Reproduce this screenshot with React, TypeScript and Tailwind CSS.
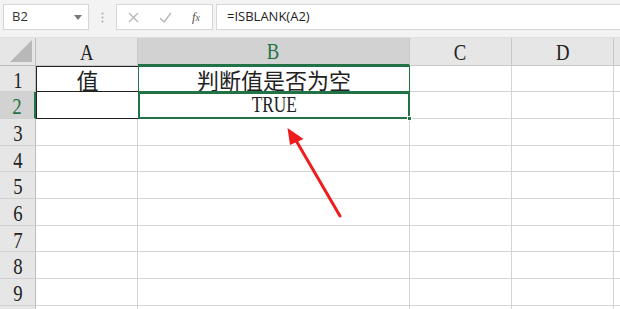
import React from "react";

const serif = { fontFamily: '"Liberation Serif", "Noto Sans CJK SC", serif' };
const cjk = { fontFamily: '"Noto Sans CJK SC", sans-serif' };

const colW = [36, 102, 272, 102, 102, 6];
const rowH = [26, 27, 27, 26, 27, 27, 26, 27, 27, 10];

function Narrow({ children, className = "" }: { children: React.ReactNode; className?: string }) {
  return <span className={"inline-block scale-x-[0.78] leading-none " + className}>{children}</span>;
}

export default function App() {
  const rows = rowH.map((h, i) => i + 1);
  return (
    <div className="relative w-[620px] h-[309px] overflow-hidden bg-white">
      {/* toolbar */}
      <div className="h-[38px] bg-[#f3f3f3] flex items-start pt-[4px] pl-[3px] border-b border-[#e0e0e0]">
        <div className="w-[86px] h-[26px] bg-white border border-[#d6d6d6] flex items-center justify-between pl-[8px] pr-[6px]">
          <span className="text-[13px] text-[#333]" style={{ fontFamily: '"Open Sans", "Noto Sans", sans-serif' }}>B2</span>
          <svg width="8" height="5" viewBox="0 0 8 5"><path d="M0 0 L8 0 L4 5 Z" fill="#777" /></svg>
        </div>
        <div className="w-[27px] h-[26px] flex items-center justify-center">
          <svg width="3" height="11" viewBox="0 0 3 11"><circle cx="1.5" cy="1.5" r="1" fill="#aaa" /><circle cx="1.5" cy="5.5" r="1" fill="#aaa" /><circle cx="1.5" cy="9.5" r="1" fill="#aaa" /></svg>
        </div>
        <div className="w-[97px] h-[26px] bg-white border border-[#d6d6d6] flex items-center">
          <div className="w-[32px] flex justify-center">
            <svg width="11" height="11" viewBox="0 0 11 11"><path d="M1 1 L10 10 M10 1 L1 10" stroke="#b5b5b5" strokeWidth="1.3" /></svg>
          </div>
          <div className="w-[32px] flex justify-center">
            <svg width="13" height="11" viewBox="0 0 13 11"><path d="M1 6 L5 10 L12 1" stroke="#b5b5b5" strokeWidth="1.3" fill="none" /></svg>
          </div>
          <div className="w-[30px] flex justify-center">
            <span className="text-[13px] italic text-[#555]" style={serif}>f<span className="text-[10px]">x</span></span>
          </div>
        </div>
        <div className="ml-[3px] flex-1 h-[26px] bg-white border border-[#d6d6d6] border-r-0 flex items-center pl-[10px]">
          <span className="text-[13px] text-[#222]" style={{ fontFamily: '"Open Sans", "Noto Sans", sans-serif' }}>=ISBLANK(A2)</span>
        </div>
      </div>

      {/* grid */}
      <div
        className="grid"
        style={{ gridTemplateColumns: colW.map((w) => w + "px").join(" "), gridTemplateRows: ["28px", ...rowH.map((h) => h + "px")].join(" ") }}
      >
        {/* header row */}
        <div className="bg-[#e6e6e6] border-r border-b border-[#bdbdbd] relative">
          <svg className="absolute right-[3px] bottom-[3px]" width="22" height="22" viewBox="0 0 22 22"><path d="M22 0 L22 22 L0 22 Z" fill="#b8b8b8" /></svg>
        </div>
        <div className="bg-[#e6e6e6] border-r border-b border-[#c8c8c8] flex items-center justify-center text-[24px] text-[#222]" style={serif}><Narrow>A</Narrow></div>
        <div className="bg-[#d2d2d2] border-r border-[#c8c8c8] border-b-2 border-b-[#217346] flex items-center justify-center text-[24px] text-[#217346]" style={serif}><Narrow>B</Narrow></div>
        <div className="bg-[#e6e6e6] border-r border-b border-[#c8c8c8] flex items-center justify-center text-[24px] text-[#222]" style={serif}><Narrow>C</Narrow></div>
        <div className="bg-[#e6e6e6] border-r border-b border-[#c8c8c8] flex items-center justify-center text-[24px] text-[#222]" style={serif}><Narrow>D</Narrow></div>
        <div className="bg-[#e6e6e6] border-b border-[#c8c8c8]"></div>

        {rows.map((r) => {
          const sel = r === 2;
          return (
            <React.Fragment key={r}>
              <div
                className={
                  "border-b border-[#d0d0d0] flex items-center justify-center text-[24px] overflow-hidden " +
                  (sel ? "bg-[#d2d2d2] text-[#217346] border-r-2 border-r-[#217346]" : "bg-[#e6e6e6] text-[#222] border-r border-r-[#bdbdbd]")
                }
                style={serif}
              >
                {r <= 9 ? <Narrow className="translate-y-[1px]">{r}</Narrow> : null}
              </div>
              {/* A */}
              {r === 1 ? (
                <div className="border border-[#222] border-r-0 flex items-end justify-center pb-[1px] text-[22px] leading-none text-[#222] overflow-hidden" style={cjk}>值</div>
              ) : r === 2 ? (
                <div className="border border-[#222] border-t-0 border-r-0"></div>
              ) : (
                <div className="border-r border-b border-[#d4d4d4]"></div>
              )}
              {/* B */}
              {r === 1 ? (
                <div className="border border-[#217346] flex items-end justify-center pb-[1px] text-[22px] leading-none text-[#222] overflow-hidden" style={cjk}>判断值是否为空</div>
              ) : r === 2 ? (
                <div className="relative border-2 border-[#217346] flex items-end justify-center pb-[1px] text-[24px] text-[#222]" style={serif}>
                  <span className="inline-block scale-x-[0.72] leading-none">TRUE</span>
                  <div className="absolute right-[-4px] bottom-[-4px] w-[5px] h-[5px] bg-[#217346] border border-white"></div>
                </div>
              ) : (
                <div className="border-r border-b border-[#d4d4d4]"></div>
              )}
              <div className="border-r border-b border-[#d4d4d4]"></div>
              <div className="border-r border-b border-[#d4d4d4]"></div>
              <div className="border-b border-[#d4d4d4]"></div>
            </React.Fragment>
          );
        })}
      </div>

      {/* arrow */}
      <svg className="absolute left-0 top-0 pointer-events-none" width="620" height="309" viewBox="0 0 620 309">
        <line x1="340" y1="216" x2="294" y2="137" stroke="#ee1c1c" strokeWidth="3" strokeLinecap="round" />
        <path d="M287.5 128 L290 145 L303.5 139 Z" fill="#ee1c1c" />
      </svg>
    </div>
  );
}
